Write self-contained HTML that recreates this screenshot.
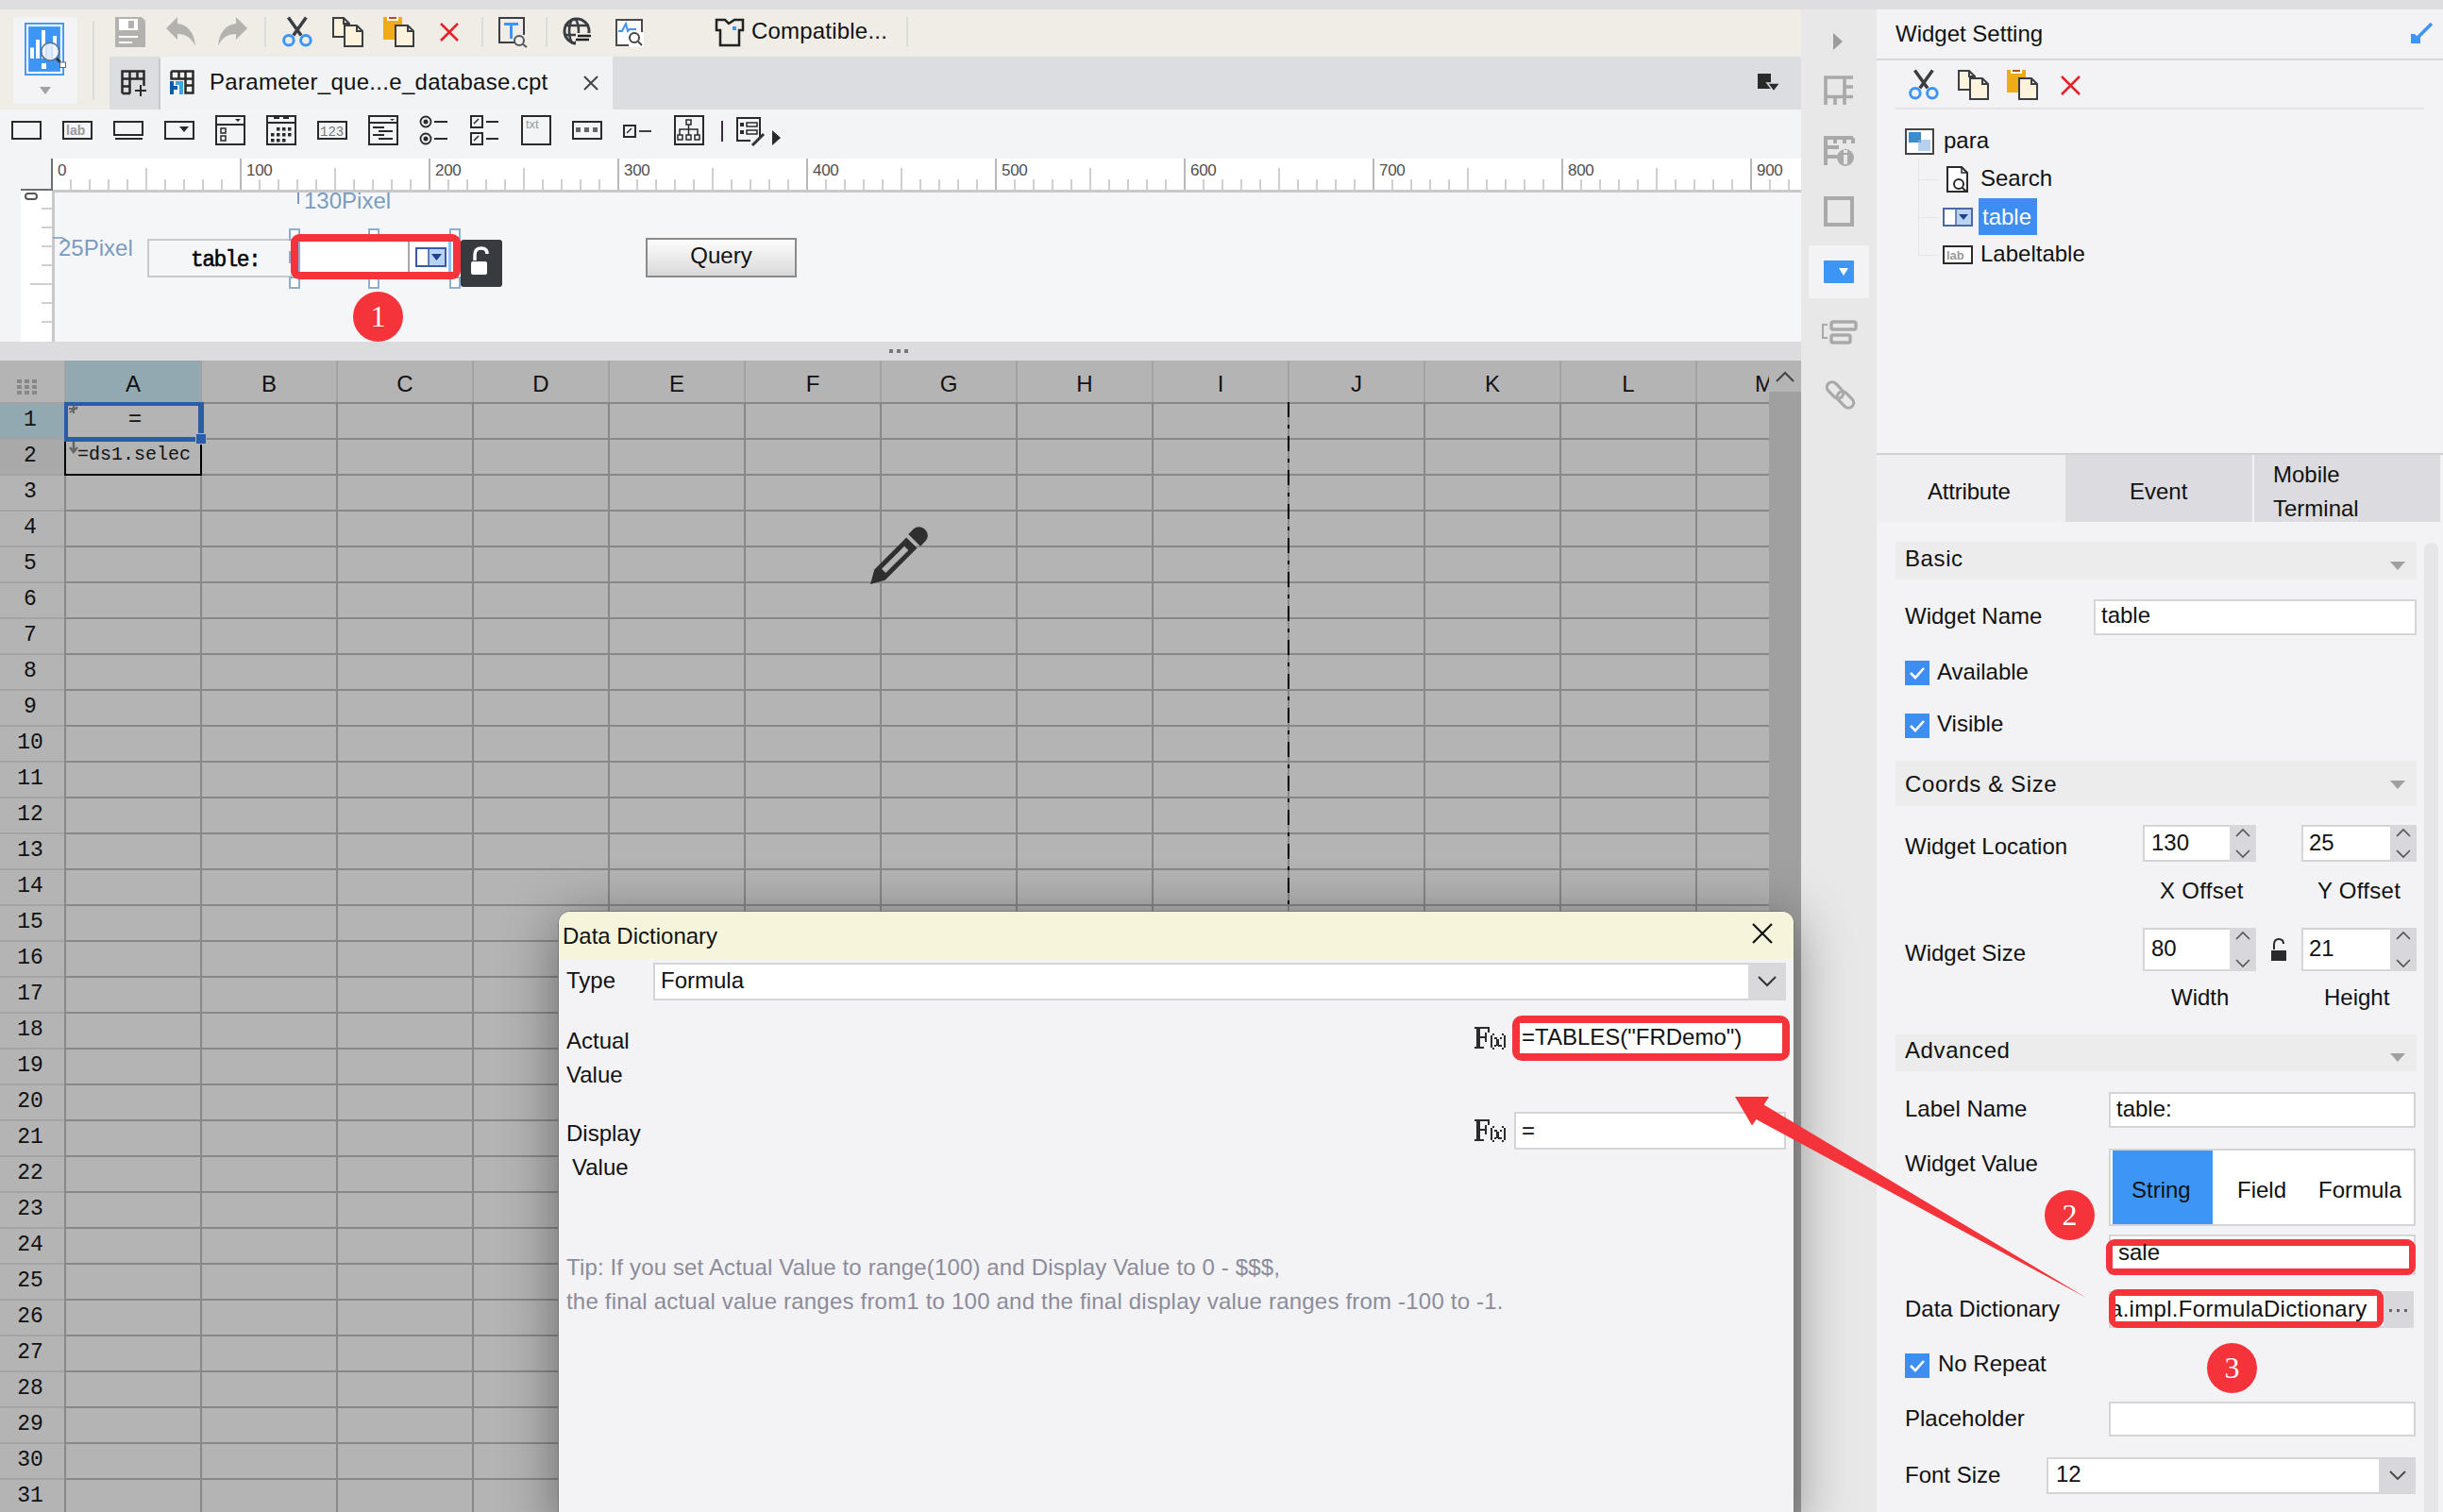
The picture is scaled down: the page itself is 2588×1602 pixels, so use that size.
<!DOCTYPE html><html><head><meta charset="utf-8"><style>
*{margin:0;padding:0;box-sizing:border-box}
html,body{width:2588px;height:1602px;overflow:hidden;background:#f3f3f6}
body{position:relative;font-family:"Liberation Sans",sans-serif}
div{position:absolute}
svg{position:absolute;overflow:visible}
.mono{font-family:"Liberation Mono",monospace}
</style></head><body>
<div style="left:0px;top:0px;width:2588px;height:10px;background:#dedee1"></div>
<div style="left:0px;top:10px;width:1908px;height:106px;background:#efede6"></div>
<div style="left:1908px;top:10px;width:80px;height:1592px;background:#e8e8e9"></div>
<div style="left:1988px;top:10px;width:600px;height:1592px;background:#f3f3f6"></div>
<div style="left:116px;top:60px;width:1792px;height:56px;background:#dcdde0"></div>
<div style="left:170px;top:60px;width:479px;height:56px;background:#f2f3f5"></div>
<div style="left:0px;top:116px;width:1908px;height:52px;background:#f3f4f6"></div>
<div style="left:0px;top:168px;width:55px;height:34px;background:#f3f4f6"></div>
<div style="left:55px;top:168px;width:1853px;height:33px;background:#ffffff"></div>
<div style="left:55px;top:201px;width:1853px;height:3px;background:#c9c9cb"></div>
<div style="left:0px;top:201px;width:22px;height:161px;background:#f3f4f6"></div>
<div style="left:22px;top:201px;width:33px;height:161px;background:#ffffff"></div>
<div style="left:55px;top:201px;width:3px;height:161px;background:#c9c9cb"></div>
<div style="left:58px;top:204px;width:1850px;height:158px;background:#f5f6f8"></div>
<div style="left:0px;top:362px;width:1908px;height:20px;background:#dcdcdf"></div>
<div style="left:0px;top:382px;width:1874px;height:1220px;background:#b4b4b4"></div>
<div style="left:68px;top:426px;width:2px;height:1176px;background:#888"></div><div style="left:68px;top:382px;width:2px;height:44px;background:#a3a3a3"></div><div style="left:212px;top:426px;width:2px;height:1176px;background:#888"></div><div style="left:212px;top:382px;width:2px;height:44px;background:#a3a3a3"></div><div style="left:356px;top:426px;width:2px;height:1176px;background:#888"></div><div style="left:356px;top:382px;width:2px;height:44px;background:#a3a3a3"></div><div style="left:500px;top:426px;width:2px;height:1176px;background:#888"></div><div style="left:500px;top:382px;width:2px;height:44px;background:#a3a3a3"></div><div style="left:644px;top:426px;width:2px;height:1176px;background:#888"></div><div style="left:644px;top:382px;width:2px;height:44px;background:#a3a3a3"></div><div style="left:788px;top:426px;width:2px;height:1176px;background:#888"></div><div style="left:788px;top:382px;width:2px;height:44px;background:#a3a3a3"></div><div style="left:932px;top:426px;width:2px;height:1176px;background:#888"></div><div style="left:932px;top:382px;width:2px;height:44px;background:#a3a3a3"></div><div style="left:1076px;top:426px;width:2px;height:1176px;background:#888"></div><div style="left:1076px;top:382px;width:2px;height:44px;background:#a3a3a3"></div><div style="left:1220px;top:426px;width:2px;height:1176px;background:#888"></div><div style="left:1220px;top:382px;width:2px;height:44px;background:#a3a3a3"></div><div style="left:1364px;top:426px;width:2px;height:1176px;background:#888"></div><div style="left:1364px;top:382px;width:2px;height:44px;background:#a3a3a3"></div><div style="left:1508px;top:426px;width:2px;height:1176px;background:#888"></div><div style="left:1508px;top:382px;width:2px;height:44px;background:#a3a3a3"></div><div style="left:1652px;top:426px;width:2px;height:1176px;background:#888"></div><div style="left:1652px;top:382px;width:2px;height:44px;background:#a3a3a3"></div><div style="left:1796px;top:426px;width:2px;height:1176px;background:#888"></div><div style="left:1796px;top:382px;width:2px;height:44px;background:#a3a3a3"></div><div style="left:70px;top:426px;width:1804px;height:2px;background:#888"></div><div style="left:0px;top:426px;width:68px;height:2px;background:#a3a3a3"></div><div style="left:70px;top:464px;width:1804px;height:2px;background:#888"></div><div style="left:0px;top:464px;width:68px;height:2px;background:#a3a3a3"></div><div style="left:70px;top:502px;width:1804px;height:2px;background:#888"></div><div style="left:0px;top:502px;width:68px;height:2px;background:#a3a3a3"></div><div style="left:70px;top:540px;width:1804px;height:2px;background:#888"></div><div style="left:0px;top:540px;width:68px;height:2px;background:#a3a3a3"></div><div style="left:70px;top:578px;width:1804px;height:2px;background:#888"></div><div style="left:0px;top:578px;width:68px;height:2px;background:#a3a3a3"></div><div style="left:70px;top:616px;width:1804px;height:2px;background:#888"></div><div style="left:0px;top:616px;width:68px;height:2px;background:#a3a3a3"></div><div style="left:70px;top:654px;width:1804px;height:2px;background:#888"></div><div style="left:0px;top:654px;width:68px;height:2px;background:#a3a3a3"></div><div style="left:70px;top:692px;width:1804px;height:2px;background:#888"></div><div style="left:0px;top:692px;width:68px;height:2px;background:#a3a3a3"></div><div style="left:70px;top:730px;width:1804px;height:2px;background:#888"></div><div style="left:0px;top:730px;width:68px;height:2px;background:#a3a3a3"></div><div style="left:70px;top:768px;width:1804px;height:2px;background:#888"></div><div style="left:0px;top:768px;width:68px;height:2px;background:#a3a3a3"></div><div style="left:70px;top:806px;width:1804px;height:2px;background:#888"></div><div style="left:0px;top:806px;width:68px;height:2px;background:#a3a3a3"></div><div style="left:70px;top:844px;width:1804px;height:2px;background:#888"></div><div style="left:0px;top:844px;width:68px;height:2px;background:#a3a3a3"></div><div style="left:70px;top:882px;width:1804px;height:2px;background:#888"></div><div style="left:0px;top:882px;width:68px;height:2px;background:#a3a3a3"></div><div style="left:70px;top:920px;width:1804px;height:2px;background:#888"></div><div style="left:0px;top:920px;width:68px;height:2px;background:#a3a3a3"></div><div style="left:70px;top:958px;width:1804px;height:2px;background:#888"></div><div style="left:0px;top:958px;width:68px;height:2px;background:#a3a3a3"></div><div style="left:70px;top:996px;width:1804px;height:2px;background:#888"></div><div style="left:0px;top:996px;width:68px;height:2px;background:#a3a3a3"></div><div style="left:70px;top:1034px;width:1804px;height:2px;background:#888"></div><div style="left:0px;top:1034px;width:68px;height:2px;background:#a3a3a3"></div><div style="left:70px;top:1072px;width:1804px;height:2px;background:#888"></div><div style="left:0px;top:1072px;width:68px;height:2px;background:#a3a3a3"></div><div style="left:70px;top:1110px;width:1804px;height:2px;background:#888"></div><div style="left:0px;top:1110px;width:68px;height:2px;background:#a3a3a3"></div><div style="left:70px;top:1148px;width:1804px;height:2px;background:#888"></div><div style="left:0px;top:1148px;width:68px;height:2px;background:#a3a3a3"></div><div style="left:70px;top:1186px;width:1804px;height:2px;background:#888"></div><div style="left:0px;top:1186px;width:68px;height:2px;background:#a3a3a3"></div><div style="left:70px;top:1224px;width:1804px;height:2px;background:#888"></div><div style="left:0px;top:1224px;width:68px;height:2px;background:#a3a3a3"></div><div style="left:70px;top:1262px;width:1804px;height:2px;background:#888"></div><div style="left:0px;top:1262px;width:68px;height:2px;background:#a3a3a3"></div><div style="left:70px;top:1300px;width:1804px;height:2px;background:#888"></div><div style="left:0px;top:1300px;width:68px;height:2px;background:#a3a3a3"></div><div style="left:70px;top:1338px;width:1804px;height:2px;background:#888"></div><div style="left:0px;top:1338px;width:68px;height:2px;background:#a3a3a3"></div><div style="left:70px;top:1376px;width:1804px;height:2px;background:#888"></div><div style="left:0px;top:1376px;width:68px;height:2px;background:#a3a3a3"></div><div style="left:70px;top:1414px;width:1804px;height:2px;background:#888"></div><div style="left:0px;top:1414px;width:68px;height:2px;background:#a3a3a3"></div><div style="left:70px;top:1452px;width:1804px;height:2px;background:#888"></div><div style="left:0px;top:1452px;width:68px;height:2px;background:#a3a3a3"></div><div style="left:70px;top:1490px;width:1804px;height:2px;background:#888"></div><div style="left:0px;top:1490px;width:68px;height:2px;background:#a3a3a3"></div><div style="left:70px;top:1528px;width:1804px;height:2px;background:#888"></div><div style="left:0px;top:1528px;width:68px;height:2px;background:#a3a3a3"></div><div style="left:70px;top:1566px;width:1804px;height:2px;background:#888"></div><div style="left:0px;top:1566px;width:68px;height:2px;background:#a3a3a3"></div><div style="left:70px;top:1604px;width:1804px;height:2px;background:#888"></div><div style="left:0px;top:1604px;width:68px;height:2px;background:#a3a3a3"></div>
<div style="left:70px;top:382px;width:142px;height:44px;background:#93a9b1"></div>
<div style="left:0px;top:428px;width:68px;height:36px;background:#93a9b1"></div>
<div style="left:0px;top:466px;width:68px;height:36px;background:#a9a9a9"></div>
<div style="left:101px;top:392.0px;height:30px;line-height:30px;font-size:24px;color:#111;text-align:center;width:80px;">A</div>
<div style="left:245px;top:392.0px;height:30px;line-height:30px;font-size:24px;color:#111;text-align:center;width:80px;">B</div>
<div style="left:389px;top:392.0px;height:30px;line-height:30px;font-size:24px;color:#111;text-align:center;width:80px;">C</div>
<div style="left:533px;top:392.0px;height:30px;line-height:30px;font-size:24px;color:#111;text-align:center;width:80px;">D</div>
<div style="left:677px;top:392.0px;height:30px;line-height:30px;font-size:24px;color:#111;text-align:center;width:80px;">E</div>
<div style="left:821px;top:392.0px;height:30px;line-height:30px;font-size:24px;color:#111;text-align:center;width:80px;">F</div>
<div style="left:965px;top:392.0px;height:30px;line-height:30px;font-size:24px;color:#111;text-align:center;width:80px;">G</div>
<div style="left:1109px;top:392.0px;height:30px;line-height:30px;font-size:24px;color:#111;text-align:center;width:80px;">H</div>
<div style="left:1253px;top:392.0px;height:30px;line-height:30px;font-size:24px;color:#111;text-align:center;width:80px;">I</div>
<div style="left:1397px;top:392.0px;height:30px;line-height:30px;font-size:24px;color:#111;text-align:center;width:80px;">J</div>
<div style="left:1541px;top:392.0px;height:30px;line-height:30px;font-size:24px;color:#111;text-align:center;width:80px;">K</div>
<div style="left:1685px;top:392.0px;height:30px;line-height:30px;font-size:24px;color:#111;text-align:center;width:80px;">L</div>
<div style="left:1829px;top:392.0px;height:30px;line-height:30px;font-size:24px;color:#111;text-align:center;width:80px;">M</div>
<div style="left:0px;top:429.5px;height:30px;line-height:30px;font-size:23px;color:#111;text-align:center;width:64px;font-family:Liberation Mono,monospace">1</div>
<div style="left:0px;top:467.5px;height:30px;line-height:30px;font-size:23px;color:#111;text-align:center;width:64px;font-family:Liberation Mono,monospace">2</div>
<div style="left:0px;top:505.5px;height:30px;line-height:30px;font-size:23px;color:#111;text-align:center;width:64px;font-family:Liberation Mono,monospace">3</div>
<div style="left:0px;top:543.5px;height:30px;line-height:30px;font-size:23px;color:#111;text-align:center;width:64px;font-family:Liberation Mono,monospace">4</div>
<div style="left:0px;top:581.5px;height:30px;line-height:30px;font-size:23px;color:#111;text-align:center;width:64px;font-family:Liberation Mono,monospace">5</div>
<div style="left:0px;top:619.5px;height:30px;line-height:30px;font-size:23px;color:#111;text-align:center;width:64px;font-family:Liberation Mono,monospace">6</div>
<div style="left:0px;top:657.5px;height:30px;line-height:30px;font-size:23px;color:#111;text-align:center;width:64px;font-family:Liberation Mono,monospace">7</div>
<div style="left:0px;top:695.5px;height:30px;line-height:30px;font-size:23px;color:#111;text-align:center;width:64px;font-family:Liberation Mono,monospace">8</div>
<div style="left:0px;top:733.5px;height:30px;line-height:30px;font-size:23px;color:#111;text-align:center;width:64px;font-family:Liberation Mono,monospace">9</div>
<div style="left:0px;top:771.5px;height:30px;line-height:30px;font-size:23px;color:#111;text-align:center;width:64px;font-family:Liberation Mono,monospace">10</div>
<div style="left:0px;top:809.5px;height:30px;line-height:30px;font-size:23px;color:#111;text-align:center;width:64px;font-family:Liberation Mono,monospace">11</div>
<div style="left:0px;top:847.5px;height:30px;line-height:30px;font-size:23px;color:#111;text-align:center;width:64px;font-family:Liberation Mono,monospace">12</div>
<div style="left:0px;top:885.5px;height:30px;line-height:30px;font-size:23px;color:#111;text-align:center;width:64px;font-family:Liberation Mono,monospace">13</div>
<div style="left:0px;top:923.5px;height:30px;line-height:30px;font-size:23px;color:#111;text-align:center;width:64px;font-family:Liberation Mono,monospace">14</div>
<div style="left:0px;top:961.5px;height:30px;line-height:30px;font-size:23px;color:#111;text-align:center;width:64px;font-family:Liberation Mono,monospace">15</div>
<div style="left:0px;top:999.5px;height:30px;line-height:30px;font-size:23px;color:#111;text-align:center;width:64px;font-family:Liberation Mono,monospace">16</div>
<div style="left:0px;top:1037.5px;height:30px;line-height:30px;font-size:23px;color:#111;text-align:center;width:64px;font-family:Liberation Mono,monospace">17</div>
<div style="left:0px;top:1075.5px;height:30px;line-height:30px;font-size:23px;color:#111;text-align:center;width:64px;font-family:Liberation Mono,monospace">18</div>
<div style="left:0px;top:1113.5px;height:30px;line-height:30px;font-size:23px;color:#111;text-align:center;width:64px;font-family:Liberation Mono,monospace">19</div>
<div style="left:0px;top:1151.5px;height:30px;line-height:30px;font-size:23px;color:#111;text-align:center;width:64px;font-family:Liberation Mono,monospace">20</div>
<div style="left:0px;top:1189.5px;height:30px;line-height:30px;font-size:23px;color:#111;text-align:center;width:64px;font-family:Liberation Mono,monospace">21</div>
<div style="left:0px;top:1227.5px;height:30px;line-height:30px;font-size:23px;color:#111;text-align:center;width:64px;font-family:Liberation Mono,monospace">22</div>
<div style="left:0px;top:1265.5px;height:30px;line-height:30px;font-size:23px;color:#111;text-align:center;width:64px;font-family:Liberation Mono,monospace">23</div>
<div style="left:0px;top:1303.5px;height:30px;line-height:30px;font-size:23px;color:#111;text-align:center;width:64px;font-family:Liberation Mono,monospace">24</div>
<div style="left:0px;top:1341.5px;height:30px;line-height:30px;font-size:23px;color:#111;text-align:center;width:64px;font-family:Liberation Mono,monospace">25</div>
<div style="left:0px;top:1379.5px;height:30px;line-height:30px;font-size:23px;color:#111;text-align:center;width:64px;font-family:Liberation Mono,monospace">26</div>
<div style="left:0px;top:1417.5px;height:30px;line-height:30px;font-size:23px;color:#111;text-align:center;width:64px;font-family:Liberation Mono,monospace">27</div>
<div style="left:0px;top:1455.5px;height:30px;line-height:30px;font-size:23px;color:#111;text-align:center;width:64px;font-family:Liberation Mono,monospace">28</div>
<div style="left:0px;top:1493.5px;height:30px;line-height:30px;font-size:23px;color:#111;text-align:center;width:64px;font-family:Liberation Mono,monospace">29</div>
<div style="left:0px;top:1531.5px;height:30px;line-height:30px;font-size:23px;color:#111;text-align:center;width:64px;font-family:Liberation Mono,monospace">30</div>
<div style="left:0px;top:1569.5px;height:30px;line-height:30px;font-size:23px;color:#111;text-align:center;width:64px;font-family:Liberation Mono,monospace">31</div>
<div style="left:18px;top:402px;width:5px;height:4px;background:#888"></div><div style="left:18px;top:408px;width:5px;height:4px;background:#888"></div><div style="left:18px;top:414px;width:5px;height:4px;background:#888"></div><div style="left:26px;top:402px;width:5px;height:4px;background:#888"></div><div style="left:26px;top:408px;width:5px;height:4px;background:#888"></div><div style="left:26px;top:414px;width:5px;height:4px;background:#888"></div><div style="left:34px;top:402px;width:5px;height:4px;background:#888"></div><div style="left:34px;top:408px;width:5px;height:4px;background:#888"></div><div style="left:34px;top:414px;width:5px;height:4px;background:#888"></div>
<div style="left:1874px;top:382px;width:34px;height:1220px;background:#a0a0a0"></div>
<div style="left:1874px;top:382px;width:34px;height:33px;background:#b4b4b4"></div>
<div style="left:68px;top:464px;width:146px;height:40px;border:2px solid #000"></div>
<div style="left:68px;top:426px;width:148px;height:42px;border-style:solid;border-color:#2a5caa;border-width:4px 6px 5px 4px"></div>
<div style="left:208px;top:460px;width:10px;height:10px;background:#2a5caa;outline:1px solid #b4b4b4"></div>
<svg style="left:72px;top:430px" width="12" height="10" viewBox="0 0 12 10"><path d="M1 3H10M6 0V8M2 7L10 1" stroke="#666" stroke-width="2"/></svg>
<svg style="left:72px;top:468px" width="12" height="12" viewBox="0 0 12 12"><path d="M6 0V10M2 6L6 11L10 6" fill="none" stroke="#666" stroke-width="2.5"/></svg>
<div style="left:70px;top:428.0px;height:30px;line-height:30px;font-size:24px;color:#111;text-align:center;width:146px;">=</div>
<div style="left:82px;top:468.0px;height:28px;line-height:28px;font-size:20px;color:#111;text-align:left;white-space:nowrap;font-family:Liberation Mono,monospace;letter-spacing:0px">=ds1.selec</div>
<div style="left:1364px;top:426px;width:2px;height:540px;background:repeating-linear-gradient(#000 0 16px,transparent 16px 24px,#000 24px 28px,transparent 28px 36px)"></div>
<svg style="left:918px;top:556px" width="70" height="70" viewBox="0 0 70 70"><g transform="translate(4,63) rotate(-45)"><path d="M0 0 L14 -8 H62 V8 H14 Z" fill="#2f2f2f"/><rect x="20" y="-3" width="34" height="6" fill="#b4b4b4"/><path d="M66 -9 H74 A8 9 0 0 1 74 9 H66 Z" fill="#2f2f2f"/></g></svg>
<svg style="left:1880px;top:392px" width="22" height="14" viewBox="0 0 22 14"><path d="M2 12L11 3L20 12" fill="none" stroke="#444" stroke-width="2"/></svg>
<div style="left:591px;top:965px;width:1310px;height:650px;background:#f3f3f6;border:1px solid #7a7a7a;border-radius:13px 13px 0 0;box-shadow:0 10px 60px rgba(0,0,0,.42)"></div>
<div style="left:592px;top:966px;width:1308px;height:50px;background:#f6f5dc;border-radius:12px 12px 0 0"></div>
<div style="left:596px;top:977.0px;height:30px;line-height:30px;font-size:24px;color:#111;text-align:left;white-space:nowrap;">Data Dictionary</div>
<svg style="left:1856px;top:978px" width="22" height="22" viewBox="0 0 22 22"><path d="M1 1L21 21M21 1L1 21" stroke="#111" stroke-width="2.2"/></svg>
<div style="left:600px;top:1024.0px;height:30px;line-height:30px;font-size:24px;color:#111;text-align:left;white-space:nowrap;">Type</div>
<div style="left:692px;top:1020px;width:1200px;height:40px;background:#fff;border:2px solid #d5d5d8"></div>
<div style="left:1852px;top:1020px;width:40px;height:40px;background:#d9d9dc"></div>
<svg style="left:1862px;top:1034px" width="20" height="12" viewBox="0 0 20 12"><path d="M1 1L10 10L19 1" fill="none" stroke="#333" stroke-width="2"/></svg>
<div style="left:700px;top:1024.0px;height:30px;line-height:30px;font-size:24px;color:#111;text-align:left;white-space:nowrap;">Formula</div>
<div style="left:600px;top:1088.0px;height:30px;line-height:30px;font-size:24px;color:#111;text-align:left;white-space:nowrap;">Actual</div>
<div style="left:600px;top:1124.0px;height:30px;line-height:30px;font-size:24px;color:#111;text-align:left;white-space:nowrap;">Value</div>
<div style="left:600px;top:1186.0px;height:30px;line-height:30px;font-size:24px;color:#111;text-align:left;white-space:nowrap;">Display</div>
<div style="left:606px;top:1222.0px;height:30px;line-height:30px;font-size:24px;color:#111;text-align:left;white-space:nowrap;">Value</div>
<svg style="left:1562px;top:1088px" width="33" height="25" viewBox="0 0 33 25"><rect x="0" y="0" width="16" height="2" fill="#2b2b2b"/><rect x="2" y="0" width="4" height="23" fill="#2b2b2b"/><rect x="0" y="21" width="10" height="2" fill="#2b2b2b"/><rect x="14" y="0" width="2" height="6" fill="#2b2b2b"/><rect x="6" y="10" width="6" height="2" fill="#2b2b2b"/><rect x="11" y="6" width="2" height="10" fill="#2b2b2b"/><rect x="17" y="9" width="2" height="13" fill="#2b2b2b"/><rect x="19" y="7" width="2" height="2" fill="#2b2b2b"/><rect x="19" y="22" width="2" height="2" fill="#2b2b2b"/><rect x="31" y="9" width="2" height="13" fill="#2b2b2b"/><rect x="29" y="7" width="2" height="2" fill="#2b2b2b"/><rect x="29" y="22" width="2" height="2" fill="#2b2b2b"/><rect x="21" y="11" width="3" height="2" fill="#2b2b2b"/><rect x="27" y="11" width="2" height="2" fill="#2b2b2b"/><rect x="23" y="13" width="3" height="7" fill="#2b2b2b"/><rect x="21" y="19" width="2" height="2" fill="#2b2b2b"/><rect x="25" y="19" width="4" height="2" fill="#2b2b2b"/></svg>
<div style="left:1610px;top:1084px;width:278px;height:32px;background:#fff"></div>
<svg style="left:1602px;top:1076px" width="294" height="48" viewBox="0 0 294 48"><path d="M10 0H284A10 10 0 0 1 294 10V38A10 10 0 0 1 284 48H10A10 10 0 0 1 0 38V10A10 10 0 0 1 10 0ZM8 8V40H286V8Z" fill="#f5333a" fill-rule="evenodd"/></svg>
<div style="left:1612px;top:1084.0px;height:30px;line-height:30px;font-size:24px;color:#111;text-align:left;white-space:nowrap;">=TABLES("FRDemo")</div>
<svg style="left:1562px;top:1186px" width="33" height="25" viewBox="0 0 33 25"><rect x="0" y="0" width="16" height="2" fill="#2b2b2b"/><rect x="2" y="0" width="4" height="23" fill="#2b2b2b"/><rect x="0" y="21" width="10" height="2" fill="#2b2b2b"/><rect x="14" y="0" width="2" height="6" fill="#2b2b2b"/><rect x="6" y="10" width="6" height="2" fill="#2b2b2b"/><rect x="11" y="6" width="2" height="10" fill="#2b2b2b"/><rect x="17" y="9" width="2" height="13" fill="#2b2b2b"/><rect x="19" y="7" width="2" height="2" fill="#2b2b2b"/><rect x="19" y="22" width="2" height="2" fill="#2b2b2b"/><rect x="31" y="9" width="2" height="13" fill="#2b2b2b"/><rect x="29" y="7" width="2" height="2" fill="#2b2b2b"/><rect x="29" y="22" width="2" height="2" fill="#2b2b2b"/><rect x="21" y="11" width="3" height="2" fill="#2b2b2b"/><rect x="27" y="11" width="2" height="2" fill="#2b2b2b"/><rect x="23" y="13" width="3" height="7" fill="#2b2b2b"/><rect x="21" y="19" width="2" height="2" fill="#2b2b2b"/><rect x="25" y="19" width="4" height="2" fill="#2b2b2b"/></svg>
<div style="left:1604px;top:1178px;width:288px;height:40px;background:#fff;border:2px solid #d5d5d8"></div>
<div style="left:1612px;top:1183.0px;height:30px;line-height:30px;font-size:24px;color:#111;text-align:left;white-space:nowrap;">=</div>
<div style="left:600px;top:1328.0px;height:30px;line-height:30px;font-size:24px;color:#8c8c9a;text-align:left;white-space:nowrap;letter-spacing:0.15px">Tip: If you set Actual Value to range(100) and Display Value to 0 - $$$,</div>
<div style="left:600px;top:1364.0px;height:30px;line-height:30px;font-size:24px;color:#8c8c9a;text-align:left;white-space:nowrap;letter-spacing:0.2px">the final actual value ranges from1 to 100 and the final display value ranges from -100 to -1.</div>
<div style="left:14px;top:18px;width:68px;height:92px;background:#f4f4f6"></div>
<svg style="left:26px;top:24px" width="44" height="58" viewBox="0 0 44 58"><rect x="0" y="0" width="42" height="56" fill="#3d96f5"/><rect x="3" y="3" width="36" height="50" fill="none" stroke="#fff" stroke-width="2.2"/><rect x="6" y="26.5" width="4" height="11.5" fill="#fff"/><rect x="12" y="18" width="4" height="20" fill="#fff"/><rect x="18" y="8" width="4" height="30" fill="#fff"/><rect x="30" y="14" width="4" height="24" fill="#fff"/><circle cx="27.2" cy="30.7" r="9.5" fill="#eef5ff" fill-opacity=".9" stroke="#5a6f86" stroke-width="1.6"/><rect x="22" y="24" width="2" height="14" fill="#cfe0f7"/><rect x="28" y="24" width="2" height="14" fill="#cfe0f7"/><rect x="18" y="43" width="5" height="6" fill="#fff"/><path d="M34 38 L38 42" stroke="#333" stroke-width="2.5"/><rect x="37.5" y="42" width="6" height="5.5" fill="#fff" stroke="#666" stroke-width="1"/></svg>
<svg style="left:42px;top:92px" width="12" height="8" viewBox="0 0 12 8"><path d="M0 0H12L6 8Z" fill="#a3a3a3"/></svg>
<div style="left:98px;top:22px;width:2px;height:84px;background:#dcdcdc"></div>
<svg style="left:122px;top:18px" width="32" height="32" viewBox="0 0 32 32"><path d="M0 0H28L32 4V32H0Z" fill="#b3b2ae"/><rect x="4" y="2" width="20" height="12" fill="#fff"/><rect x="14" y="4" width="6" height="8" fill="#b3b2ae"/><rect x="4" y="20" width="20" height="2" fill="#fff"/><rect x="4" y="26" width="14" height="2" fill="#fff"/></svg>
<svg style="left:176px;top:18px" width="32" height="32" viewBox="0 0 32 32"><path d="M0 12 L12 0 V7 C22 8 30 16 31 31 C27 22 21 18 12 18 V24 Z" fill="#b3b2ae"/></svg>
<svg style="left:230px;top:18px" width="32" height="32" viewBox="0 0 32 32"><path d="M32 12 L20 0 V7 C10 8 2 16 1 31 C5 22 11 18 20 18 V24 Z" fill="#b3b2ae"/></svg>
<div style="left:280px;top:18px;width:2px;height:32px;background:#dcdcdc"></div>
<svg style="left:298px;top:18px" width="34" height="33" viewBox="0 0 34 33"><path d="M7.4 0.5 L21 19.5 M26.3 0.5 L12.8 19.5" stroke="#3a3d42" stroke-width="3.5"/><circle cx="7.9" cy="24.7" r="5.3" fill="none" stroke="#3d96f5" stroke-width="3"/><circle cx="25.9" cy="24.7" r="5.3" fill="none" stroke="#3d96f5" stroke-width="3"/></svg>
<svg style="left:352px;top:18px" width="32" height="32" viewBox="0 0 32 32"><path d="M1 1H12L18 7V21H1Z" fill="#fdf3dc" stroke="#3a3d42" stroke-width="2"/><path d="M12 1V7H18" fill="none" stroke="#3a3d42" stroke-width="2"/><path d="M13 9H26L32 15V31H13Z" fill="#fdf3dc" stroke="#3a3d42" stroke-width="2"/><path d="M26 9V15H32" fill="none" stroke="#3a3d42" stroke-width="2"/></svg>
<svg style="left:406px;top:18px" width="32" height="32" viewBox="0 0 32 32"><rect x="0" y="0" width="20" height="24" fill="#f0ab18"/><rect x="4" y="0" width="12" height="4" fill="#fff"/><rect x="6" y="0" width="8" height="2" fill="#b3540e"/><path d="M13 9H26L32 15V31H13Z" fill="#fdf3dc" stroke="#3a3d42" stroke-width="2"/><path d="M26 9V15H32" fill="none" stroke="#3a3d42" stroke-width="2"/></svg>
<svg style="left:466px;top:24px" width="20" height="20" viewBox="0 0 20 20"><path d="M1 1L19 19M19 1L1 19" stroke="#e8202a" stroke-width="2.5"/></svg>
<div style="left:510px;top:18px;width:2px;height:32px;background:#dcdcdc"></div>
<svg style="left:528px;top:18px" width="32" height="32" viewBox="0 0 32 32"><path d="M21 27H1V1H27V19" fill="none" stroke="#3a3d42" stroke-width="2"/><path d="M6 6H21V9H15V23H12V9H6Z" fill="#3d96f5"/><circle cx="22" cy="25" r="5" fill="#eee" stroke="#555" stroke-width="2"/><path d="M26 29L30 32" stroke="#555" stroke-width="2"/></svg>
<div style="left:578px;top:18px;width:2px;height:32px;background:#dcdcdc"></div>
<svg style="left:596px;top:18px" width="32" height="32" viewBox="0 0 32 32"><circle cx="15" cy="15" r="13" fill="none" stroke="#3a3d42" stroke-width="3"/><ellipse cx="12" cy="15" rx="5" ry="13" fill="none" stroke="#3a3d42" stroke-width="2.5"/><path d="M2 9H28M2 19H14" stroke="#3a3d42" stroke-width="2.5"/><rect x="14" y="17" width="16" height="13" fill="#efede6"/><path d="M16 20H30M14 24H28" stroke="#222" stroke-width="2.5"/></svg>
<svg style="left:652px;top:20px" width="32" height="32" viewBox="0 0 32 32"><rect x="1" y="1" width="27" height="27" fill="#fff" stroke="#4a4a4a" stroke-width="2"/><path d="M3 13H7L9 9L11 5L13 13L15 11H22" fill="none" stroke="#3d96f5" stroke-width="2"/><rect x="14" y="14" width="16" height="16" fill="#fff"/><circle cx="20" cy="20" r="5" fill="none" stroke="#444" stroke-width="2"/><path d="M24 24L28 28" stroke="#444" stroke-width="2"/></svg>
<svg style="left:758px;top:20px" width="32" height="30" viewBox="0 0 32 30"><path d="M1 1H10L14 5L20 1H29V12H25V28H5V12H1Z" fill="none" stroke="#222" stroke-width="2.5"/><rect x="18" y="8" width="4" height="4" fill="#3d96f5"/></svg>
<div style="left:796px;top:18.0px;height:30px;line-height:30px;font-size:24px;color:#111;text-align:left;white-space:nowrap;letter-spacing:0.2px">Compatible...</div>
<div style="left:960px;top:18px;width:2px;height:32px;background:#dcdcdc"></div>
<div style="left:168px;top:62px;width:2px;height:54px;background:#c9c9cd"></div>
<svg style="left:128px;top:74px" width="28" height="28" viewBox="0 0 28 28"><path d="M1.5 25V1.5H24.5V17M1.5 9.5H24.5M9.5 1.5V25M17.5 1.5V9.5M1.5 17.5H10M1.5 25H10" fill="none" stroke="#2a2a2a" stroke-width="2.5"/><path d="M21 16V28M15 22H27" stroke="#2a2a2a" stroke-width="2"/></svg>
<svg style="left:180px;top:74px" width="26" height="26" viewBox="0 0 26 26"><path d="M1.5 1.5H24.5V24.5H16.5V1.5M1.5 1.5V9.5H24.5M9.5 1.5V9.5M16.5 16.5H24.5" fill="none" stroke="#2a2a2a" stroke-width="2.5"/><path d="M0 12H4V17H8V21H4V26H0Z" fill="#0b5cad"/><path d="M6 12H14V26H10V16H6Z" fill="#3aa7de"/></svg>
<div style="left:222px;top:72.0px;height:30px;line-height:30px;font-size:24px;color:#111;text-align:left;white-space:nowrap;letter-spacing:0.3px">Parameter_que...e_database.cpt</div>
<svg style="left:618px;top:80px" width="16" height="16" viewBox="0 0 16 16"><path d="M1 1L15 15M15 1L1 15" stroke="#444" stroke-width="2"/></svg>
<svg style="left:1862px;top:78px" width="26" height="22" viewBox="0 0 26 22"><rect x="0" y="0" width="14" height="16" fill="#2a2a2a"/><path d="M10 10H24L17 19Z" fill="#2a2a2a" stroke="#dcdde0" stroke-width="1.5"/></svg>
<svg style="left:12px;top:128px" width="32" height="20" viewBox="0 0 32 20"><rect x="1" y="1" width="30" height="18" fill="none" stroke="#2a2a2a" stroke-width="2"/></svg>
<svg style="left:66px;top:128px" width="32" height="20" viewBox="0 0 32 20"><rect x="1" y="1" width="30" height="18" fill="none" stroke="#2a2a2a" stroke-width="2"/><text x="4" y="15" font-family="Liberation Sans" font-size="14" font-weight="bold" fill="#9a9a9a">lab</text></svg>
<svg style="left:120px;top:128px" width="32" height="20" viewBox="0 0 32 20"><rect x="1" y="1" width="30" height="14" fill="none" stroke="#2a2a2a" stroke-width="2"/><path d="M2 19H31" stroke="#2a2a2a" stroke-width="2"/></svg>
<svg style="left:174px;top:128px" width="32" height="20" viewBox="0 0 32 20"><rect x="1" y="1" width="30" height="18" fill="none" stroke="#2a2a2a" stroke-width="2"/><path d="M16 6H26L21 12Z" fill="#2a2a2a"/></svg>
<svg style="left:228px;top:122px" width="32" height="32" viewBox="0 0 32 32"><rect x="1" y="1" width="30" height="30" fill="none" stroke="#2a2a2a" stroke-width="2"/><path d="M1 10H31" stroke="#2a2a2a" stroke-width="2"/><path d="M21 4H27L24 7Z" fill="#2a2a2a"/><rect x="6" y="14" width="5" height="5" fill="none" stroke="#2a2a2a" stroke-width="1.5"/><rect x="6" y="22" width="5" height="5" fill="none" stroke="#2a2a2a" stroke-width="1.5"/></svg>
<svg style="left:282px;top:122px" width="32" height="32" viewBox="0 0 32 32"><rect x="1" y="1" width="30" height="30" fill="none" stroke="#2a2a2a" stroke-width="2"/><path d="M1 8H31" stroke="#2a2a2a" stroke-width="2"/><rect x="8" y="1" width="6" height="3" fill="#2a2a2a"/><rect x="18" y="1" width="6" height="3" fill="#2a2a2a"/><rect x="11" y="13" width="3.5" height="3.5" fill="#2a2a2a"/><rect x="17" y="13" width="3.5" height="3.5" fill="#2a2a2a"/><rect x="23" y="13" width="3.5" height="3.5" fill="#2a2a2a"/><rect x="5" y="19" width="3.5" height="3.5" fill="#2a2a2a"/><rect x="11" y="19" width="3.5" height="3.5" fill="#2a2a2a"/><rect x="17" y="19" width="3.5" height="3.5" fill="#2a2a2a"/><rect x="23" y="19" width="3.5" height="3.5" fill="#2a2a2a"/><rect x="5" y="25" width="3.5" height="3.5" fill="#2a2a2a"/><rect x="11" y="25" width="3.5" height="3.5" fill="#2a2a2a"/><rect x="17" y="25" width="3.5" height="3.5" fill="#2a2a2a"/></svg>
<svg style="left:336px;top:128px" width="32" height="20" viewBox="0 0 32 20"><rect x="1" y="1" width="30" height="18" fill="none" stroke="#2a2a2a" stroke-width="2"/><text x="3" y="16" font-family="Liberation Mono" font-size="14" fill="#777">123</text></svg>
<svg style="left:390px;top:122px" width="32" height="32" viewBox="0 0 32 32"><rect x="1" y="1" width="30" height="30" fill="none" stroke="#2a2a2a" stroke-width="2"/><path d="M1 8H31" stroke="#2a2a2a" stroke-width="2"/><path d="M23 4H28L25.5 6Z" fill="#2a2a2a"/><path d="M5 13H17M11 17H26M5 21H17M11 25H26" stroke="#2a2a2a" stroke-width="1.8"/></svg>
<svg style="left:444px;top:122px" width="32" height="32" viewBox="0 0 32 32"><circle cx="7" cy="7" r="5.5" fill="none" stroke="#2a2a2a" stroke-width="1.8"/><circle cx="7" cy="7" r="2.5" fill="#2a2a2a"/><circle cx="7" cy="25" r="5.5" fill="none" stroke="#2a2a2a" stroke-width="1.8"/><circle cx="7" cy="25" r="2.5" fill="#2a2a2a"/><path d="M16 7H30M16 25H30" stroke="#2a2a2a" stroke-width="1.8"/></svg>
<svg style="left:498px;top:122px" width="32" height="32" viewBox="0 0 32 32"><rect x="1" y="1" width="12" height="12" fill="none" stroke="#2a2a2a" stroke-width="2"/><rect x="1" y="19" width="12" height="12" fill="none" stroke="#2a2a2a" stroke-width="2"/><path d="M4 9L9 4M4 27L9 22" stroke="#2a2a2a" stroke-width="1.5"/><path d="M17 7H30M17 25H30" stroke="#2a2a2a" stroke-width="1.8"/></svg>
<svg style="left:552px;top:122px" width="32" height="32" viewBox="0 0 32 32"><rect x="1" y="1" width="30" height="30" fill="none" stroke="#2a2a2a" stroke-width="2"/><text x="5" y="14" font-family="Liberation Sans" font-size="13" fill="#999">txt</text></svg>
<svg style="left:606px;top:128px" width="32" height="20" viewBox="0 0 32 20"><rect x="1" y="1" width="30" height="18" fill="none" stroke="#2a2a2a" stroke-width="2"/><rect x="4" y="7" width="5" height="5" fill="#666"/><rect x="13" y="7" width="5" height="5" fill="#666"/><rect x="22" y="7" width="5" height="5" fill="#666"/></svg>
<svg style="left:660px;top:132px" width="32" height="14" viewBox="0 0 32 14"><rect x="1" y="1" width="12" height="12" fill="none" stroke="#2a2a2a" stroke-width="2"/><path d="M4 9L9 4" stroke="#2a2a2a" stroke-width="1.5"/><path d="M17 7H30" stroke="#2a2a2a" stroke-width="1.8"/></svg>
<svg style="left:714px;top:122px" width="32" height="32" viewBox="0 0 32 32"><rect x="1" y="1" width="30" height="30" fill="none" stroke="#2a2a2a" stroke-width="2"/><rect x="13" y="5" width="5" height="5" fill="none" stroke="#2a2a2a" stroke-width="1.5"/><path d="M15.5 10V15M6 21V15H25V21M15.5 15V21" fill="none" stroke="#2a2a2a" stroke-width="1.5"/><rect x="4" y="21" width="5" height="5" fill="none" stroke="#2a2a2a" stroke-width="1.5"/><rect x="13" y="21" width="5" height="5" fill="none" stroke="#2a2a2a" stroke-width="1.5"/><rect x="22" y="21" width="5" height="5" fill="none" stroke="#2a2a2a" stroke-width="1.5"/></svg>
<div style="left:764px;top:128px;width:2px;height:22px;background:#3b2a4a"></div>
<svg style="left:780px;top:124px" width="32" height="32" viewBox="0 0 32 32"><path d="M25 22V1H1V25H15" fill="none" stroke="#2a2a2a" stroke-width="2"/><rect x="4" y="6" width="4" height="4" fill="#2a2a2a"/><rect x="4" y="14" width="4" height="4" fill="#2a2a2a"/><rect x="11" y="6" width="11" height="4" fill="none" stroke="#2a2a2a" stroke-width="1.5"/><rect x="11" y="14" width="11" height="4" fill="none" stroke="#2a2a2a" stroke-width="1.5"/><path d="M17 30L29 18" stroke="#333" stroke-width="3"/></svg>
<svg style="left:818px;top:138px" width="10" height="16" viewBox="0 0 10 16"><path d="M0 0L9 8L0 16Z" fill="#2a2a2a"/></svg>
<div style="left:54px;top:168px;width:2px;height:33px;background:#b8b8b8"></div><div style="left:74px;top:190px;width:2px;height:11px;background:#cfcfcf"></div><div style="left:94px;top:190px;width:2px;height:11px;background:#cfcfcf"></div><div style="left:114px;top:190px;width:2px;height:11px;background:#cfcfcf"></div><div style="left:134px;top:190px;width:2px;height:11px;background:#cfcfcf"></div><div style="left:154px;top:178px;width:2px;height:23px;background:#cfcfcf"></div><div style="left:174px;top:190px;width:2px;height:11px;background:#cfcfcf"></div><div style="left:194px;top:190px;width:2px;height:11px;background:#cfcfcf"></div><div style="left:214px;top:190px;width:2px;height:11px;background:#cfcfcf"></div><div style="left:234px;top:190px;width:2px;height:11px;background:#cfcfcf"></div><div style="left:254px;top:168px;width:2px;height:33px;background:#b8b8b8"></div><div style="left:274px;top:190px;width:2px;height:11px;background:#cfcfcf"></div><div style="left:294px;top:190px;width:2px;height:11px;background:#cfcfcf"></div><div style="left:314px;top:190px;width:2px;height:11px;background:#cfcfcf"></div><div style="left:334px;top:190px;width:2px;height:11px;background:#cfcfcf"></div><div style="left:354px;top:178px;width:2px;height:23px;background:#cfcfcf"></div><div style="left:374px;top:190px;width:2px;height:11px;background:#cfcfcf"></div><div style="left:394px;top:190px;width:2px;height:11px;background:#cfcfcf"></div><div style="left:414px;top:190px;width:2px;height:11px;background:#cfcfcf"></div><div style="left:434px;top:190px;width:2px;height:11px;background:#cfcfcf"></div><div style="left:454px;top:168px;width:2px;height:33px;background:#b8b8b8"></div><div style="left:474px;top:190px;width:2px;height:11px;background:#cfcfcf"></div><div style="left:494px;top:190px;width:2px;height:11px;background:#cfcfcf"></div><div style="left:514px;top:190px;width:2px;height:11px;background:#cfcfcf"></div><div style="left:534px;top:190px;width:2px;height:11px;background:#cfcfcf"></div><div style="left:554px;top:178px;width:2px;height:23px;background:#cfcfcf"></div><div style="left:574px;top:190px;width:2px;height:11px;background:#cfcfcf"></div><div style="left:594px;top:190px;width:2px;height:11px;background:#cfcfcf"></div><div style="left:614px;top:190px;width:2px;height:11px;background:#cfcfcf"></div><div style="left:634px;top:190px;width:2px;height:11px;background:#cfcfcf"></div><div style="left:654px;top:168px;width:2px;height:33px;background:#b8b8b8"></div><div style="left:674px;top:190px;width:2px;height:11px;background:#cfcfcf"></div><div style="left:694px;top:190px;width:2px;height:11px;background:#cfcfcf"></div><div style="left:714px;top:190px;width:2px;height:11px;background:#cfcfcf"></div><div style="left:734px;top:190px;width:2px;height:11px;background:#cfcfcf"></div><div style="left:754px;top:178px;width:2px;height:23px;background:#cfcfcf"></div><div style="left:774px;top:190px;width:2px;height:11px;background:#cfcfcf"></div><div style="left:794px;top:190px;width:2px;height:11px;background:#cfcfcf"></div><div style="left:814px;top:190px;width:2px;height:11px;background:#cfcfcf"></div><div style="left:834px;top:190px;width:2px;height:11px;background:#cfcfcf"></div><div style="left:854px;top:168px;width:2px;height:33px;background:#b8b8b8"></div><div style="left:874px;top:190px;width:2px;height:11px;background:#cfcfcf"></div><div style="left:894px;top:190px;width:2px;height:11px;background:#cfcfcf"></div><div style="left:914px;top:190px;width:2px;height:11px;background:#cfcfcf"></div><div style="left:934px;top:190px;width:2px;height:11px;background:#cfcfcf"></div><div style="left:954px;top:178px;width:2px;height:23px;background:#cfcfcf"></div><div style="left:974px;top:190px;width:2px;height:11px;background:#cfcfcf"></div><div style="left:994px;top:190px;width:2px;height:11px;background:#cfcfcf"></div><div style="left:1014px;top:190px;width:2px;height:11px;background:#cfcfcf"></div><div style="left:1034px;top:190px;width:2px;height:11px;background:#cfcfcf"></div><div style="left:1054px;top:168px;width:2px;height:33px;background:#b8b8b8"></div><div style="left:1074px;top:190px;width:2px;height:11px;background:#cfcfcf"></div><div style="left:1094px;top:190px;width:2px;height:11px;background:#cfcfcf"></div><div style="left:1114px;top:190px;width:2px;height:11px;background:#cfcfcf"></div><div style="left:1134px;top:190px;width:2px;height:11px;background:#cfcfcf"></div><div style="left:1154px;top:178px;width:2px;height:23px;background:#cfcfcf"></div><div style="left:1174px;top:190px;width:2px;height:11px;background:#cfcfcf"></div><div style="left:1194px;top:190px;width:2px;height:11px;background:#cfcfcf"></div><div style="left:1214px;top:190px;width:2px;height:11px;background:#cfcfcf"></div><div style="left:1234px;top:190px;width:2px;height:11px;background:#cfcfcf"></div><div style="left:1254px;top:168px;width:2px;height:33px;background:#b8b8b8"></div><div style="left:1274px;top:190px;width:2px;height:11px;background:#cfcfcf"></div><div style="left:1294px;top:190px;width:2px;height:11px;background:#cfcfcf"></div><div style="left:1314px;top:190px;width:2px;height:11px;background:#cfcfcf"></div><div style="left:1334px;top:190px;width:2px;height:11px;background:#cfcfcf"></div><div style="left:1354px;top:178px;width:2px;height:23px;background:#cfcfcf"></div><div style="left:1374px;top:190px;width:2px;height:11px;background:#cfcfcf"></div><div style="left:1394px;top:190px;width:2px;height:11px;background:#cfcfcf"></div><div style="left:1414px;top:190px;width:2px;height:11px;background:#cfcfcf"></div><div style="left:1434px;top:190px;width:2px;height:11px;background:#cfcfcf"></div><div style="left:1454px;top:168px;width:2px;height:33px;background:#b8b8b8"></div><div style="left:1474px;top:190px;width:2px;height:11px;background:#cfcfcf"></div><div style="left:1494px;top:190px;width:2px;height:11px;background:#cfcfcf"></div><div style="left:1514px;top:190px;width:2px;height:11px;background:#cfcfcf"></div><div style="left:1534px;top:190px;width:2px;height:11px;background:#cfcfcf"></div><div style="left:1554px;top:178px;width:2px;height:23px;background:#cfcfcf"></div><div style="left:1574px;top:190px;width:2px;height:11px;background:#cfcfcf"></div><div style="left:1594px;top:190px;width:2px;height:11px;background:#cfcfcf"></div><div style="left:1614px;top:190px;width:2px;height:11px;background:#cfcfcf"></div><div style="left:1634px;top:190px;width:2px;height:11px;background:#cfcfcf"></div><div style="left:1654px;top:168px;width:2px;height:33px;background:#b8b8b8"></div><div style="left:1674px;top:190px;width:2px;height:11px;background:#cfcfcf"></div><div style="left:1694px;top:190px;width:2px;height:11px;background:#cfcfcf"></div><div style="left:1714px;top:190px;width:2px;height:11px;background:#cfcfcf"></div><div style="left:1734px;top:190px;width:2px;height:11px;background:#cfcfcf"></div><div style="left:1754px;top:178px;width:2px;height:23px;background:#cfcfcf"></div><div style="left:1774px;top:190px;width:2px;height:11px;background:#cfcfcf"></div><div style="left:1794px;top:190px;width:2px;height:11px;background:#cfcfcf"></div><div style="left:1814px;top:190px;width:2px;height:11px;background:#cfcfcf"></div><div style="left:1834px;top:190px;width:2px;height:11px;background:#cfcfcf"></div><div style="left:1854px;top:168px;width:2px;height:33px;background:#b8b8b8"></div><div style="left:1874px;top:190px;width:2px;height:11px;background:#cfcfcf"></div><div style="left:1894px;top:190px;width:2px;height:11px;background:#cfcfcf"></div>
<div style="left:54px;top:168px;width:2px;height:33px;background:#6f6f6f"></div>
<div style="left:61px;top:170.0px;height:22px;line-height:22px;font-size:17px;color:#505050;text-align:left;white-space:nowrap;letter-spacing:-0.3px">0</div>
<div style="left:261px;top:170.0px;height:22px;line-height:22px;font-size:17px;color:#505050;text-align:left;white-space:nowrap;letter-spacing:-0.3px">100</div>
<div style="left:461px;top:170.0px;height:22px;line-height:22px;font-size:17px;color:#505050;text-align:left;white-space:nowrap;letter-spacing:-0.3px">200</div>
<div style="left:661px;top:170.0px;height:22px;line-height:22px;font-size:17px;color:#505050;text-align:left;white-space:nowrap;letter-spacing:-0.3px">300</div>
<div style="left:861px;top:170.0px;height:22px;line-height:22px;font-size:17px;color:#505050;text-align:left;white-space:nowrap;letter-spacing:-0.3px">400</div>
<div style="left:1061px;top:170.0px;height:22px;line-height:22px;font-size:17px;color:#505050;text-align:left;white-space:nowrap;letter-spacing:-0.3px">500</div>
<div style="left:1261px;top:170.0px;height:22px;line-height:22px;font-size:17px;color:#505050;text-align:left;white-space:nowrap;letter-spacing:-0.3px">600</div>
<div style="left:1461px;top:170.0px;height:22px;line-height:22px;font-size:17px;color:#505050;text-align:left;white-space:nowrap;letter-spacing:-0.3px">700</div>
<div style="left:1661px;top:170.0px;height:22px;line-height:22px;font-size:17px;color:#505050;text-align:left;white-space:nowrap;letter-spacing:-0.3px">800</div>
<div style="left:1861px;top:170.0px;height:22px;line-height:22px;font-size:17px;color:#505050;text-align:left;white-space:nowrap;letter-spacing:-0.3px">900</div>
<div style="left:44px;top:220px;width:11px;height:2px;background:#cfcfcf"></div><div style="left:44px;top:240px;width:11px;height:2px;background:#cfcfcf"></div><div style="left:44px;top:260px;width:11px;height:2px;background:#cfcfcf"></div><div style="left:44px;top:280px;width:11px;height:2px;background:#cfcfcf"></div><div style="left:32px;top:300px;width:23px;height:2px;background:#cfcfcf"></div><div style="left:44px;top:320px;width:11px;height:2px;background:#cfcfcf"></div><div style="left:44px;top:340px;width:11px;height:2px;background:#cfcfcf"></div>
<div style="left:22px;top:200px;width:34px;height:2px;background:#6f6f6f"></div>
<svg style="left:26px;top:204px" width="14" height="8" viewBox="0 0 14 8"><rect x="1" y="1" width="12" height="6" rx="3" fill="none" stroke="#555" stroke-width="2"/></svg>
<div style="left:62px;top:248.0px;height:30px;line-height:30px;font-size:24px;color:#7b9cc0;text-align:left;white-space:nowrap;letter-spacing:0px">25Pixel</div>
<svg style="left:56px;top:251px" width="16" height="6" viewBox="0 0 16 6"><path d="M0 1H10L15 4" fill="none" stroke="#7b9cc0" stroke-width="1.5"/></svg>
<div style="left:322px;top:198.0px;height:30px;line-height:30px;font-size:24px;color:#7b9cc0;text-align:left;white-space:nowrap;letter-spacing:0px">130Pixel</div>
<div style="left:315px;top:204px;width:2px;height:12px;background:#7b9cc0"></div>
<div style="left:156px;top:253px;width:154px;height:41px;background:#f5f6f8;border:2px solid #cacaca"></div>
<div style="left:202px;top:260.5px;height:30px;line-height:30px;font-size:23px;color:#000;text-align:left;white-space:nowrap;font-family:Liberation Mono,monospace;letter-spacing:-1.6px;-webkit-text-stroke:0.5px #000">table:</div>
<div style="left:316px;top:256px;width:162px;height:33px;background:#fff"></div>
<div style="left:316px;top:256px;width:2px;height:33px;background:#7fb2ee"></div>
<div style="left:475px;top:256px;width:3px;height:33px;background:#8fc0f2"></div>
<div style="left:432px;top:256px;width:2px;height:33px;background:#a9a9a9"></div>
<svg style="left:440px;top:262px" width="33" height="21" viewBox="0 0 33 21"><rect x="1" y="1" width="31" height="19" fill="#fff" stroke="#3a5aa8" stroke-width="2"/><rect x="14" y="2" width="17" height="17" fill="#b9d3f3"/><path d="M14 2V19" stroke="#3a5aa8" stroke-width="1.5"/><path d="M17 7H28L22.5 14Z" fill="#1f3f8f"/></svg>
<div style="left:306px;top:242px;width:12px;height:13px;border:2px solid #8eaed0;background:#fff"></div>
<div style="left:306px;top:293px;width:12px;height:13px;border:2px solid #8eaed0;background:#fff"></div>
<div style="left:390px;top:242px;width:12px;height:13px;border:2px solid #8eaed0;background:#fff"></div>
<div style="left:390px;top:293px;width:12px;height:13px;border:2px solid #8eaed0;background:#fff"></div>
<div style="left:476px;top:242px;width:12px;height:13px;border:2px solid #8eaed0;background:#fff"></div>
<div style="left:476px;top:293px;width:12px;height:13px;border:2px solid #8eaed0;background:#fff"></div>
<div style="left:306px;top:266px;width:12px;height:13px;border:2px solid #8eaed0;background:#fff"></div>
<svg style="left:308px;top:248px" width="180" height="48" viewBox="0 0 180 48"><path d="M9 0H171A9 9 0 0 1 180 9V39A9 9 0 0 1 171 48H9A9 9 0 0 1 0 39V9A9 9 0 0 1 9 0ZM8 8V40H172V8Z" fill="#f5333a" fill-rule="evenodd"/></svg>
<div style="left:488px;top:254px;width:44px;height:50px;background:#373b3f;border-radius:3px"></div>
<svg style="left:498px;top:262px" width="24" height="34" viewBox="0 0 24 34"><path d="M5 14V8C5 3 8 1 12 1C16 1 18 3 18 7" fill="none" stroke="#fff" stroke-width="3.5"/><rect x="1" y="15" width="17" height="14" rx="2" fill="#fff"/></svg>
<div style="left:684px;top:252px;width:160px;height:42px;border:2px solid #8a8a8a;background:linear-gradient(#fdfdfd,#d9d9d9)"></div>
<div style="left:684px;top:256.0px;height:30px;line-height:30px;font-size:24px;color:#111;text-align:center;width:160px;">Query</div>
<div style="left:374px;top:309px;width:53px;height:53px;background:#f5333a;border-radius:50%"></div>
<div style="left:374px;top:315.0px;height:40px;line-height:40px;font-size:32px;color:#fff;text-align:center;width:53px;font-family:Liberation Serif,serif">1</div>
<div style="left:942px;top:370px;width:4px;height:4px;background:#777"></div>
<div style="left:950px;top:370px;width:4px;height:4px;background:#777"></div>
<div style="left:958px;top:370px;width:4px;height:4px;background:#777"></div>
<svg style="left:1942px;top:35px" width="10" height="18" viewBox="0 0 10 18"><path d="M0 0L10 9L0 18Z" fill="#9c9c9c"/></svg>
<svg style="left:1932px;top:80px" width="32" height="32" viewBox="0 0 32 32"><path d="M2 31V2H31M2 22.5H31M12 22V31M22 2V31M22 12H31" fill="none" stroke="#a9a9a9" stroke-width="3.6"/></svg>
<svg style="left:1932px;top:144px" width="32" height="32" viewBox="0 0 32 32"><path d="M2 31V2H31M2 12H16M2 22H14M12 2V8M22 2V8M31 2V8" fill="none" stroke="#a9a9a9" stroke-width="4"/><circle cx="23" cy="23" r="9" fill="#a9a9a9"/><rect x="21" y="20" width="4" height="10" fill="#e8e8e9"/><rect x="21" y="15" width="4" height="3" fill="#e8e8e9"/></svg>
<svg style="left:1932px;top:208px" width="32" height="32" viewBox="0 0 32 32"><rect x="2" y="2" width="28" height="28" fill="none" stroke="#a9a9a9" stroke-width="4"/></svg>
<div style="left:1916px;top:260px;width:64px;height:56px;background:#f3f3f5"></div>
<div style="left:1932px;top:276px;width:32px;height:24px;background:#3d96f5;border-radius:1px"></div>
<svg style="left:1948px;top:284px" width="10" height="8" viewBox="0 0 10 8"><path d="M0 0H10L5 8Z" fill="#fff"/></svg>
<svg style="left:1929px;top:339px" width="38" height="26" viewBox="0 0 38 26"><path d="M7 5H2V19H7" fill="none" stroke="#a9a9a9" stroke-width="2"/><rect x="11" y="2" width="26" height="8" rx="2" fill="none" stroke="#a9a9a9" stroke-width="3.5"/><rect x="11" y="16" width="20" height="8" rx="2" fill="none" stroke="#a9a9a9" stroke-width="3.5"/></svg>
<svg style="left:1931px;top:400px" width="36" height="36" viewBox="0 0 36 36"><rect x="3" y="8" width="20" height="11" rx="5.5" transform="rotate(45 13 13.5)" fill="none" stroke="#a9a9a9" stroke-width="3.2"/><rect x="14" y="18" width="20" height="11" rx="5.5" transform="rotate(45 24 23.5)" fill="none" stroke="#a9a9a9" stroke-width="3.2"/></svg>
<div style="left:2008px;top:20.6px;height:30px;line-height:30px;font-size:24px;color:#111;text-align:left;white-space:nowrap;">Widget Setting</div>
<svg style="left:2552px;top:22px" width="26" height="26" viewBox="0 0 26 26"><path d="M24 3L9 18" stroke="#3d96f5" stroke-width="3.5"/><path d="M2 14H6L8 16H12V24H2Z" fill="#3d96f5"/></svg>
<div style="left:1988px;top:62px;width:600px;height:2px;background:#d8d8dc"></div>
<svg style="left:2021px;top:74px" width="34" height="33" viewBox="0 0 34 33"><path d="M7.4 0.5 L21 19.5 M26.3 0.5 L12.8 19.5" stroke="#3a3d42" stroke-width="3.5"/><circle cx="7.9" cy="24.7" r="5.3" fill="none" stroke="#3d96f5" stroke-width="3"/><circle cx="25.9" cy="24.7" r="5.3" fill="none" stroke="#3d96f5" stroke-width="3"/></svg>
<svg style="left:2074px;top:74px" width="32" height="32" viewBox="0 0 32 32"><path d="M1 1H12L18 7V21H1Z" fill="#fdf3dc" stroke="#3a3d42" stroke-width="2"/><path d="M12 1V7H18" fill="none" stroke="#3a3d42" stroke-width="2"/><path d="M13 9H26L32 15V31H13Z" fill="#fdf3dc" stroke="#3a3d42" stroke-width="2"/><path d="M26 9V15H32" fill="none" stroke="#3a3d42" stroke-width="2"/></svg>
<svg style="left:2126px;top:74px" width="32" height="32" viewBox="0 0 32 32"><rect x="0" y="0" width="20" height="24" fill="#f0ab18"/><rect x="4" y="0" width="12" height="4" fill="#fff"/><rect x="6" y="0" width="8" height="2" fill="#b3540e"/><path d="M13 9H26L32 15V31H13Z" fill="#fdf3dc" stroke="#3a3d42" stroke-width="2"/><path d="M26 9V15H32" fill="none" stroke="#3a3d42" stroke-width="2"/></svg>
<svg style="left:2183px;top:80px" width="22" height="21" viewBox="0 0 22 21"><path d="M1 1L20 20M20 1L1 20" stroke="#e8202a" stroke-width="2.5"/></svg>
<div style="left:2008px;top:114px;width:560px;height:2px;background:#e2e2e5"></div>
<svg style="left:2018px;top:136px" width="31" height="28" viewBox="0 0 31 28"><rect x="1" y="1" width="29" height="26" fill="#fff" stroke="#444" stroke-width="2"/><rect x="4" y="4" width="13" height="11" fill="#3a8cd0"/><rect x="14" y="12" width="13" height="12" fill="#b8d0f0"/><path d="M14 12H17V15H14Z" fill="#6aa0d8"/></svg>
<div style="left:2059px;top:134.0px;height:30px;line-height:30px;font-size:24px;color:#111;text-align:left;white-space:nowrap;">para</div>
<div style="left:2032px;top:168px;width:1px;height:103px;background:#e6e6e8"></div>
<div style="left:2033px;top:190px;width:20px;height:1px;background:#e6e6e8"></div>
<div style="left:2033px;top:230px;width:20px;height:1px;background:#e6e6e8"></div>
<div style="left:2033px;top:270px;width:20px;height:1px;background:#e6e6e8"></div>
<svg style="left:2062px;top:176px" width="26" height="28" viewBox="0 0 26 28"><path d="M1 1H16L22 7V27H1Z" fill="#fff" stroke="#2a2a2a" stroke-width="2"/><path d="M16 1V7H22" fill="none" stroke="#2a2a2a" stroke-width="1.5"/><circle cx="13" cy="19" r="5" fill="none" stroke="#2a2a2a" stroke-width="2"/><path d="M17 23L21 27" stroke="#2a2a2a" stroke-width="2"/></svg>
<div style="left:2098px;top:174.4px;height:30px;line-height:30px;font-size:24px;color:#111;text-align:left;white-space:nowrap;">Search</div>
<svg style="left:2058px;top:220px" width="32" height="20" viewBox="0 0 32 20"><rect x="1" y="1" width="30" height="18" fill="#fff" stroke="#4a68a8" stroke-width="2"/><rect x="14" y="2" width="16" height="16" fill="#b9d3f3"/><path d="M14 2V18" stroke="#4a68a8" stroke-width="1.5"/><path d="M17 7H27L22 13Z" fill="#1f3f8f"/></svg>
<div style="left:2096px;top:210px;width:62px;height:39px;background:#3d8ef0"></div>
<div style="left:2100px;top:215.0px;height:30px;line-height:30px;font-size:24px;color:#fff;text-align:left;white-space:nowrap;">table</div>
<svg style="left:2058px;top:260px" width="32" height="20" viewBox="0 0 32 20"><rect x="1" y="1" width="30" height="18" fill="#fff" stroke="#2a2a2a" stroke-width="2"/><text x="4" y="15" font-family="Liberation Sans" font-size="13" font-weight="bold" fill="#9a9a9a">lab</text></svg>
<div style="left:2098px;top:254.39999999999998px;height:30px;line-height:30px;font-size:24px;color:#111;text-align:left;white-space:nowrap;">Labeltable</div>
<div style="left:1988px;top:480px;width:600px;height:2px;background:#d0d0d4"></div>
<div style="left:1988px;top:482px;width:200px;height:71px;background:#efeff2"></div>
<div style="left:2188px;top:482px;width:198px;height:71px;background:#dcdce0"></div>
<div style="left:2388px;top:482px;width:197px;height:71px;background:#dcdce0"></div>
<div style="left:2042px;top:506.0px;height:30px;line-height:30px;font-size:24px;color:#111;text-align:left;white-space:nowrap;letter-spacing:-0.2px">Attribute</div>
<div style="left:2256px;top:506.0px;height:30px;line-height:30px;font-size:24px;color:#111;text-align:left;white-space:nowrap;">Event</div>
<div style="left:2408px;top:488.0px;height:30px;line-height:30px;font-size:24px;color:#111;text-align:left;white-space:nowrap;">Mobile</div>
<div style="left:2408px;top:524.0px;height:30px;line-height:30px;font-size:24px;color:#111;text-align:left;white-space:nowrap;">Terminal</div>
<div style="left:2568px;top:575px;width:15px;height:1030px;background:#e6e6e8;border-radius:7px 7px 0 0"></div>
<div style="left:2008px;top:574px;width:552px;height:40px;background:#ececec"></div>
<div style="left:2018px;top:576.5px;height:30px;line-height:30px;font-size:24px;color:#111;text-align:left;white-space:nowrap;letter-spacing:0.6px">Basic</div>
<svg style="left:2532px;top:595px" width="16" height="9" viewBox="0 0 16 9"><path d="M0 0H16L8 9Z" fill="#a0a0a0"/></svg>
<div style="left:2018px;top:637.7px;height:30px;line-height:30px;font-size:24px;color:#111;text-align:left;white-space:nowrap;">Widget Name</div>
<div style="left:2218px;top:635px;width:342px;height:38px;background:#fff;border:2px solid #d5d5d8"></div>
<div style="left:2226px;top:637.0px;height:30px;line-height:30px;font-size:24px;color:#111;text-align:left;white-space:nowrap;">table</div>
<div style="left:2018px;top:700px;width:26px;height:26px;background:#3d8ef0"></div>
<svg style="left:2022px;top:706px" width="18" height="14" viewBox="0 0 18 14"><path d="M2 7L7 12L16 2" fill="none" stroke="#fff" stroke-width="2.6"/></svg>
<div style="left:2052px;top:696.7px;height:30px;line-height:30px;font-size:24px;color:#111;text-align:left;white-space:nowrap;">Available</div>
<div style="left:2018px;top:756px;width:26px;height:26px;background:#3d8ef0"></div>
<svg style="left:2022px;top:762px" width="18" height="14" viewBox="0 0 18 14"><path d="M2 7L7 12L16 2" fill="none" stroke="#fff" stroke-width="2.6"/></svg>
<div style="left:2052px;top:752.0px;height:30px;line-height:30px;font-size:24px;color:#111;text-align:left;white-space:nowrap;">Visible</div>
<div style="left:2008px;top:806px;width:552px;height:48px;background:#ececec"></div>
<div style="left:2018px;top:816.0px;height:30px;line-height:30px;font-size:24px;color:#111;text-align:left;white-space:nowrap;letter-spacing:0.6px">Coords &amp; Size</div>
<svg style="left:2532px;top:827px" width="16" height="9" viewBox="0 0 16 9"><path d="M0 0H16L8 9Z" fill="#a0a0a0"/></svg>
<div style="left:2018px;top:882.0px;height:30px;line-height:30px;font-size:24px;color:#111;text-align:left;white-space:nowrap;">Widget Location</div>
<div style="left:2270px;top:874px;width:120px;height:39px;background:#fff;border:2px solid #d5d5d8"></div>
<div style="left:2362px;top:874px;width:28px;height:39px;background:#d8d8dc"></div>
<svg style="left:2368px;top:878px" width="16" height="31" viewBox="0 0 16 31"><path d="M1 8L8 1L15 8M1 23L8 30L15 23" fill="none" stroke="#555" stroke-width="1.6"/></svg>
<div style="left:2279px;top:878.0px;height:30px;line-height:30px;font-size:24px;color:#111;text-align:left;white-space:nowrap;">130</div>
<div style="left:2438px;top:874px;width:122px;height:39px;background:#fff;border:2px solid #d5d5d8"></div>
<div style="left:2532px;top:874px;width:28px;height:39px;background:#d8d8dc"></div>
<svg style="left:2538px;top:878px" width="16" height="31" viewBox="0 0 16 31"><path d="M1 8L8 1L15 8M1 23L8 30L15 23" fill="none" stroke="#555" stroke-width="1.6"/></svg>
<div style="left:2446px;top:878.0px;height:30px;line-height:30px;font-size:24px;color:#111;text-align:left;white-space:nowrap;">25</div>
<div style="left:2288px;top:928.6px;height:30px;line-height:30px;font-size:24px;color:#111;text-align:left;white-space:nowrap;letter-spacing:0.3px">X Offset</div>
<div style="left:2455px;top:928.6px;height:30px;line-height:30px;font-size:24px;color:#111;text-align:left;white-space:nowrap;letter-spacing:0.3px">Y Offset</div>
<div style="left:2018px;top:994.5px;height:30px;line-height:30px;font-size:24px;color:#111;text-align:left;white-space:nowrap;">Widget Size</div>
<div style="left:2270px;top:983px;width:120px;height:46px;background:#fff;border:2px solid #d5d5d8"></div>
<div style="left:2362px;top:983px;width:28px;height:46px;background:#d8d8dc"></div>
<svg style="left:2368px;top:987px" width="16" height="38" viewBox="0 0 16 38"><path d="M1 8L8 1L15 8M1 30L8 37L15 30" fill="none" stroke="#555" stroke-width="1.6"/></svg>
<div style="left:2279px;top:990.0px;height:30px;line-height:30px;font-size:24px;color:#111;text-align:left;white-space:nowrap;">80</div>
<svg style="left:2405px;top:994px" width="18" height="25" viewBox="0 0 18 25"><path d="M4 12V7C4 3 6 1 9 1C12 1 14 3 14 6" fill="none" stroke="#2a2a2a" stroke-width="2"/><rect x="1" y="13" width="16" height="11" fill="#2a2a2a"/></svg>
<div style="left:2438px;top:983px;width:122px;height:46px;background:#fff;border:2px solid #d5d5d8"></div>
<div style="left:2532px;top:983px;width:28px;height:46px;background:#d8d8dc"></div>
<svg style="left:2538px;top:987px" width="16" height="38" viewBox="0 0 16 38"><path d="M1 8L8 1L15 8M1 30L8 37L15 30" fill="none" stroke="#555" stroke-width="1.6"/></svg>
<div style="left:2446px;top:990.0px;height:30px;line-height:30px;font-size:24px;color:#111;text-align:left;white-space:nowrap;">21</div>
<div style="left:2300px;top:1042.0px;height:30px;line-height:30px;font-size:24px;color:#111;text-align:left;white-space:nowrap;">Width</div>
<div style="left:2462px;top:1042.0px;height:30px;line-height:30px;font-size:24px;color:#111;text-align:left;white-space:nowrap;">Height</div>
<div style="left:2008px;top:1096px;width:552px;height:39px;background:#ececec"></div>
<div style="left:2018px;top:1098.0px;height:30px;line-height:30px;font-size:24px;color:#111;text-align:left;white-space:nowrap;letter-spacing:0.6px">Advanced</div>
<svg style="left:2532px;top:1116px" width="16" height="9" viewBox="0 0 16 9"><path d="M0 0H16L8 9Z" fill="#a0a0a0"/></svg>
<div style="left:2018px;top:1160.0px;height:30px;line-height:30px;font-size:24px;color:#111;text-align:left;white-space:nowrap;">Label Name</div>
<div style="left:2234px;top:1157px;width:325px;height:38px;background:#fff;border:2px solid #d5d5d8"></div>
<div style="left:2242px;top:1160.0px;height:30px;line-height:30px;font-size:24px;color:#111;text-align:left;white-space:nowrap;">table:</div>
<div style="left:2018px;top:1218.0px;height:30px;line-height:30px;font-size:24px;color:#111;text-align:left;white-space:nowrap;">Widget Value</div>
<div style="left:2234px;top:1217px;width:325px;height:82px;background:#fff;border:2px solid #d5d5d8"></div>
<div style="left:2238px;top:1219px;width:106px;height:78px;background:#3d96f5"></div>
<div style="left:2258px;top:1246.0px;height:30px;line-height:30px;font-size:24px;color:#111;text-align:left;white-space:nowrap;">String</div>
<div style="left:2370px;top:1246.0px;height:30px;line-height:30px;font-size:24px;color:#111;text-align:left;white-space:nowrap;">Field</div>
<div style="left:2456px;top:1246.0px;height:30px;line-height:30px;font-size:24px;color:#111;text-align:left;white-space:nowrap;">Formula</div>
<div style="left:2234px;top:1308px;width:325px;height:43px;background:#fff;border:2px solid #d5d5d8"></div>
<div style="left:2238px;top:1320px;width:314px;height:24px;background:#fff"></div>
<svg style="left:2231px;top:1313px" width="328" height="38" viewBox="0 0 328 38"><path d="M9 0H319A9 9 0 0 1 328 9V29A9 9 0 0 1 319 38H9A9 9 0 0 1 0 29V9A9 9 0 0 1 9 0ZM7 7V31H321V7Z" fill="#f5333a" fill-rule="evenodd"/></svg>
<div style="left:2244px;top:1312.0px;height:30px;line-height:30px;font-size:24px;color:#111;text-align:left;white-space:nowrap;">sale</div>
<div style="left:2018px;top:1372.0px;height:30px;line-height:30px;font-size:24px;color:#111;text-align:left;white-space:nowrap;">Data Dictionary</div>
<div style="left:2234px;top:1368px;width:323px;height:39px;background:#fff;border:2px solid #d5d5d8"></div>
<div style="left:2525px;top:1368px;width:32px;height:39px;background:#d8d8dc"></div>
<div style="left:2531px;top:1387px;width:3px;height:3px;background:#666"></div>
<div style="left:2539px;top:1387px;width:3px;height:3px;background:#666"></div>
<div style="left:2547px;top:1387px;width:3px;height:3px;background:#666"></div>
<div style="left:2241px;top:1373px;width:277px;height:27px;overflow:hidden;background:#fff"><div style="left:-6px;top:-1.5px;height:30px;line-height:30px;font-size:24px;color:#111;white-space:nowrap;letter-spacing:0.3px">a.impl.FormulaDictionary</div></div>
<svg style="left:2234px;top:1366px" width="291" height="41" viewBox="0 0 291 41"><path d="M9 0H282A9 9 0 0 1 291 9V32A9 9 0 0 1 282 41H9A9 9 0 0 1 0 32V9A9 9 0 0 1 9 0ZM7 7V34H284V7Z" fill="#f5333a" fill-rule="evenodd"/></svg>
<div style="left:2018px;top:1434px;width:26px;height:26px;background:#3d8ef0"></div>
<svg style="left:2022px;top:1440px" width="18" height="14" viewBox="0 0 18 14"><path d="M2 7L7 12L16 2" fill="none" stroke="#fff" stroke-width="2.6"/></svg>
<div style="left:2053px;top:1430.0px;height:30px;line-height:30px;font-size:24px;color:#111;text-align:left;white-space:nowrap;">No Repeat</div>
<div style="left:2018px;top:1488.0px;height:30px;line-height:30px;font-size:24px;color:#111;text-align:left;white-space:nowrap;">Placeholder</div>
<div style="left:2234px;top:1485px;width:325px;height:37px;background:#fff;border:2px solid #d5d5d8"></div>
<div style="left:2018px;top:1547.6px;height:30px;line-height:30px;font-size:24px;color:#111;text-align:left;white-space:nowrap;">Font Size</div>
<div style="left:2168px;top:1544px;width:391px;height:39px;background:#fff;border:2px solid #d5d5d8"></div>
<div style="left:2520px;top:1546px;width:39px;height:35px;background:#d8d8dc"></div>
<svg style="left:2531px;top:1558px" width="18" height="10" viewBox="0 0 18 10"><path d="M1 1L9 9L17 1" fill="none" stroke="#444" stroke-width="1.8"/></svg>
<div style="left:2178px;top:1547.0px;height:30px;line-height:30px;font-size:24px;color:#111;text-align:left;white-space:nowrap;">12</div>
<div style="left:2166px;top:1261px;width:53px;height:53px;background:#f5333a;border-radius:50%"></div>
<div style="left:2166px;top:1267.0px;height:40px;line-height:40px;font-size:32px;color:#fff;text-align:center;width:53px;font-family:Liberation Serif,serif">2</div>
<div style="left:2338px;top:1423px;width:53px;height:53px;background:#f5333a;border-radius:50%"></div>
<div style="left:2338px;top:1429.0px;height:40px;line-height:40px;font-size:32px;color:#fff;text-align:center;width:53px;font-family:Liberation Serif,serif">3</div>
<svg style="left:0;top:0" width="2588" height="1602" viewBox="0 0 2588 1602"><path d="M1838 1162 L1874 1162 L1868.6 1170.6 L2211 1375.5 L1860.5 1186 L1856 1192.6 Z" fill="#f5333a"/></svg>
</body></html>
